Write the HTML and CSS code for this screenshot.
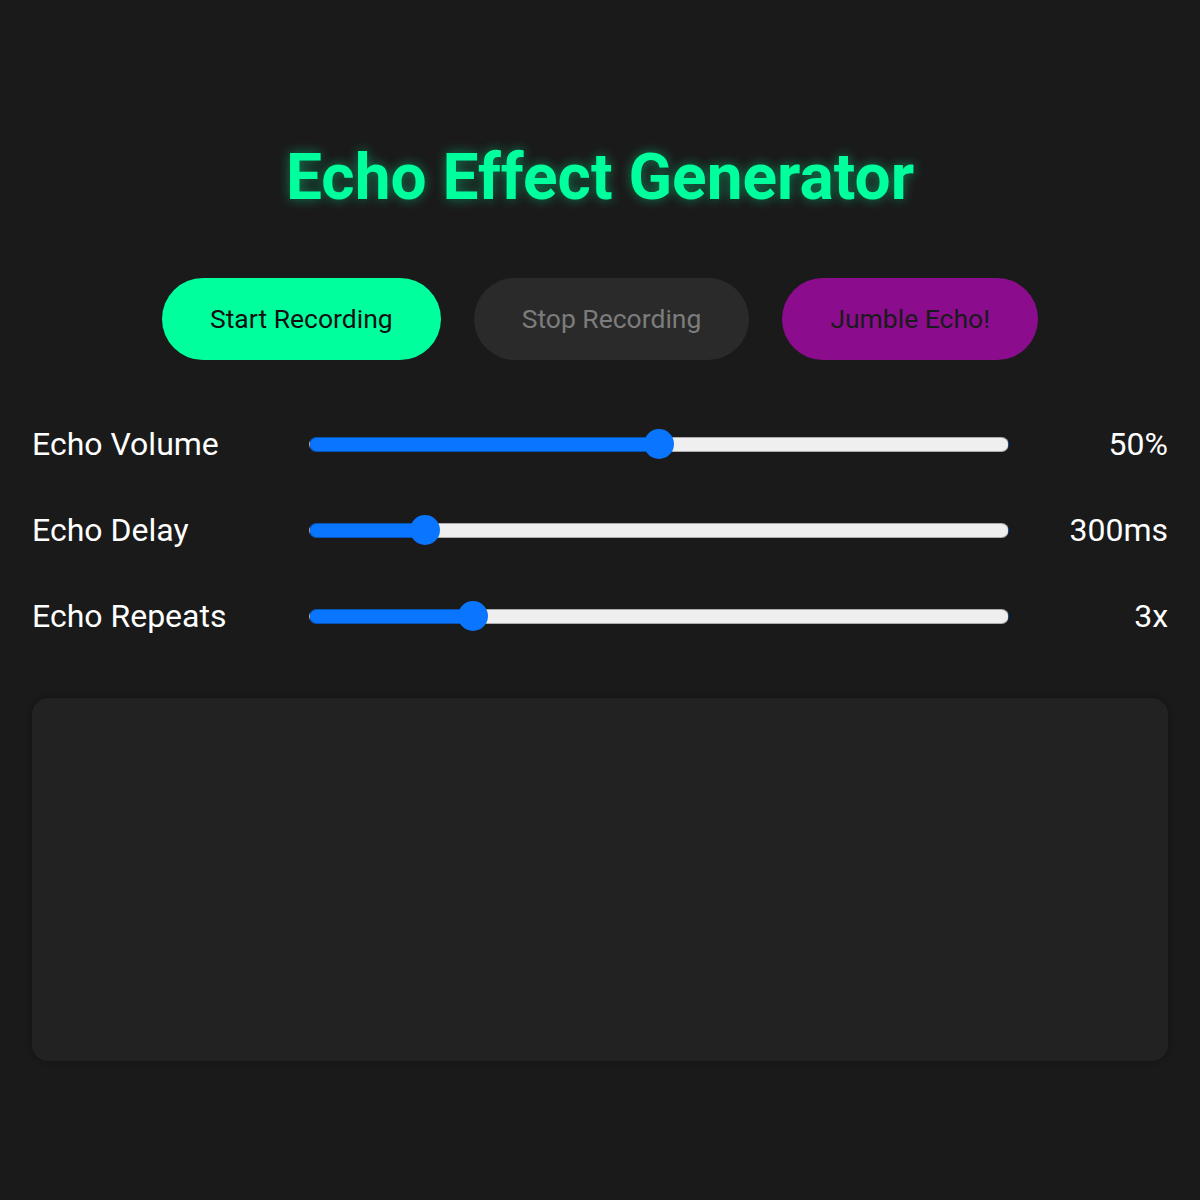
FILE: index.html
```html
<!DOCTYPE html>
<html lang="en">
<head>
  <meta charset="UTF-8" />
  <title>Echo Effect Generator</title>
  <meta name="viewport" content="width=device-width, initial-scale=1" />
  <link rel="stylesheet" href="styles.css">
</head>
<body>

  <main class="app">
    <h1 class="title">Echo Effect Generator</h1>

    <div class="buttons">
      <button class="btn btn-start" id="startBtn">Start Recording</button>
      <button class="btn btn-stop" id="stopBtn" disabled>Stop Recording</button>
      <button class="btn btn-jumble" id="jumbleBtn">Jumble Echo!</button>
    </div>

    <section class="controls">
      <label class="control-label" for="volume">Echo Volume</label>
      <input class="slider" type="range" id="volume" min="0" max="100" value="50" style="--fill: 50%">
      <span class="control-value">50%</span>

      <label class="control-label" for="delay">Echo Delay</label>
      <input class="slider" type="range" id="delay" min="0" max="2000" value="300" style="--fill: 16.5%">
      <span class="control-value">300ms</span>

      <label class="control-label" for="repeats">Echo Repeats</label>
      <input class="slider" type="range" id="repeats" min="1" max="10" value="3" style="--fill: 23.4%">
      <span class="control-value">3x</span>
    </section>

    <canvas class="visualizer" id="visualizer"></canvas>
  </main>

</body>
</html>
```

FILE: styles.css
```css
/* Reset básico */
* {
  box-sizing: border-box;
  margin: 0;
  padding: 0;
  font-family: 'Roboto', 'Noto Sans', sans-serif;
}

body {
  min-height: 100vh;
  background: #1a1a1a;
  color: #ffffff;
}

.app {
  padding: 32px;
}

/* Titulo */
.title {
  text-align: center;
  font-size: 64px;
  font-weight: 700;
  color: #00ff9d;
  text-shadow: 0 0 12px rgba(0, 255, 157, 0.45);
  margin-top: 108px;
  margin-bottom: 63px;
}

/* Botones */
.buttons {
  display: flex;
  justify-content: center;
  gap: 33px;
}

.btn {
  border: none;
  border-radius: 42px;
  padding: 25px 48px;
  font-size: 26.5px;
  line-height: 32px;
  cursor: pointer;
}

.btn-start {
  background: #00ff9d;
  color: #111;
}

.btn-stop {
  background: #2a2a2a;
  color: #7c7c7c;
  cursor: default;
}

.btn-jumble {
  background: #8b0d8e;
  color: #1a1a1a;
}

/* Controles */
.controls {
  display: grid;
  grid-template-columns: 277px 700px 1fr;
  align-items: center;
  row-gap: 50px;
  margin-top: 66px;
}

.control-label {
  font-size: 32px;
  line-height: 36px;
}

.control-value {
  font-size: 32px;
  line-height: 36px;
  text-align: right;
}

.slider {
  -webkit-appearance: none;
  appearance: none;
  width: 700px;
  height: 15px;
  border-radius: 8px;
  border: 1px solid rgba(0, 0, 0, 0.28);
  background: linear-gradient(to right, #0a75ff var(--fill), #efefef var(--fill));
  outline: none;
}

.slider::-webkit-slider-thumb {
  -webkit-appearance: none;
  width: 30px;
  height: 30px;
  border-radius: 50%;
  background: #0a75ff;
  cursor: pointer;
}

/* Visualizador */
.visualizer {
  display: block;
  width: 100%;
  height: 363px;
  margin-top: 64px;
  background: #222222;
  border-radius: 16px;
  box-shadow: 0 0 6px rgba(0, 0, 0, 0.3);
}
```
